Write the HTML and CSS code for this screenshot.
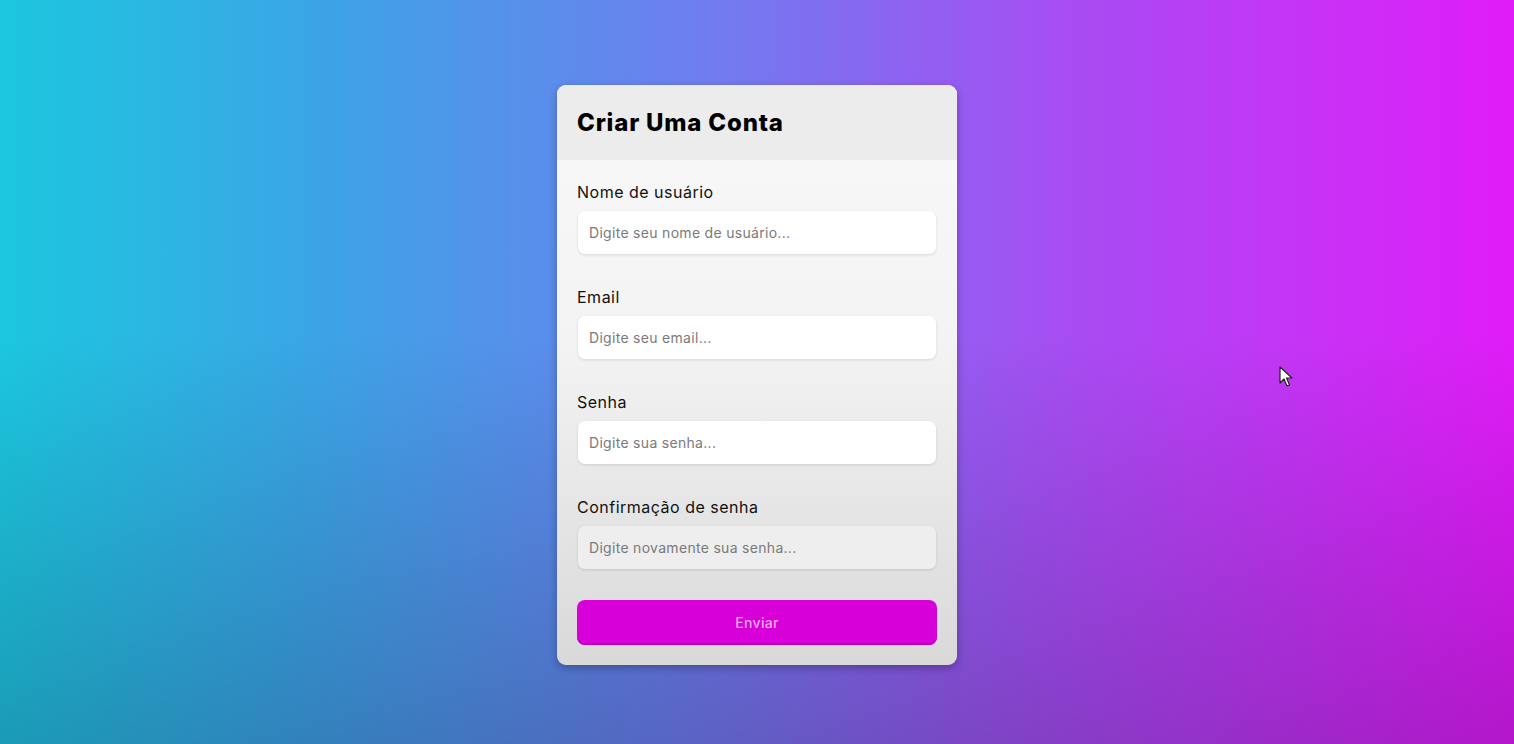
FILE: index.html
```html
<!DOCTYPE html>
<html lang="pt-BR">
<head>
<meta charset="utf-8">
<title>Criar Uma Conta</title>
<link rel="stylesheet" href="styles.css">
</head>
<body>
<main class="page">
  <section class="card">
    <header class="card-header">
      <h1 class="title">Criar Uma Conta</h1>
    </header>
    <form class="card-body">
      <div class="field">
        <label class="label" for="user">Nome de usuário</label>
        <input class="input" id="user" type="text" placeholder="Digite seu nome de usuário...">
      </div>
      <div class="field">
        <label class="label" for="email">Email</label>
        <input class="input" id="email" type="email" placeholder="Digite seu email...">
      </div>
      <div class="field">
        <label class="label" for="pass">Senha</label>
        <input class="input" id="pass" type="password" placeholder="Digite sua senha...">
      </div>
      <div class="field">
        <label class="label" for="pass2">Confirmação de senha</label>
        <input class="input input-muted" id="pass2" type="password" placeholder="Digite novamente sua senha...">
      </div>
      <button class="button" type="button">Enviar</button>
    </form>
  </section>
  <svg class="cursor" width="14" height="22" viewBox="0 0 14 22"><path d="M1 1 L1 17 L5 13 L8 20 L10.5 19 L7.5 12 L13 12 Z" fill="#fff" stroke="#222" stroke-width="1.2" stroke-linejoin="round"/></svg>
</main>
</body>
</html>
```
FILE: styles.css
```css
* { box-sizing: border-box; }
html, body { margin: 0; height: 100%; }
body {
  font-family: "Inter", "Open Sans", sans-serif;
  background:
    linear-gradient(to bottom, rgba(0,0,0,0) 45%, rgba(20,0,40,0.22) 100%),
    linear-gradient(to right, #1cc7df 0%, #3aa6e6 20%, #6c80ef 45%, #a64ef3 70%, #e11cf9 100%);
  overflow: hidden;
}
.page {
  position: relative;
  min-height: 100vh;
  display: flex;
  justify-content: center;
  align-items: flex-start;
  padding-top: 85px;
}
.card {
  width: 400px;
  border-radius: 9px;
  overflow: hidden;
  box-shadow: 0 3px 8px rgba(0,0,0,0.28);
  background: linear-gradient(to bottom, #f9f9f9 0%, #f3f3f3 45%, #d9d9d9 100%);
}
.card-header {
  height: 75px;
  display: flex;
  align-items: center;
  padding: 0 20px;
  background: #ececec;
}
.title {
  margin: 0;
  font-size: 24px;
  font-weight: 800;
  letter-spacing: 0.8px;
  color: #000;
}
.card-body {
  padding: 20px 20px 20px;
  display: flex;
  flex-direction: column;
  gap: 31px;
}
.field {
  display: flex;
  flex-direction: column;
  gap: 7px;
}
.label {
  font-size: 16px;
  line-height: 24px;
  color: #111;
  letter-spacing: 0.5px;
}
.input {
  height: 43px;
  margin: 0 1px;
  border: none;
  border-radius: 7px;
  padding: 0 11px;
  font-family: inherit;
  font-size: 14px;
  background: #fff;
  box-shadow: 0 1px 3px rgba(0,0,0,0.12);
  outline: none;
}
.input::placeholder { color: #7a7a7a; letter-spacing: 0.3px; }
.input-muted { background: #eeeeee; }
.button {
  height: 45px;
  border: none;
  border-radius: 8px;
  background: #d800d9;
  color: #f3aaf0;
  font-family: inherit;
  font-size: 14px;
  font-weight: 500;
  letter-spacing: 0.3px;
  box-shadow: inset 0 -2px 0 #bd00c0;
}
.cursor {
  position: absolute;
  left: 1279px;
  top: 366px;
}
```
